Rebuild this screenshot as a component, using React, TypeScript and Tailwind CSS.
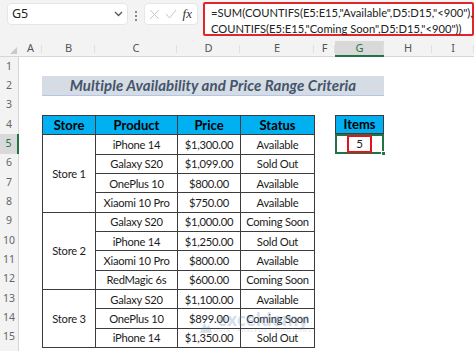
import React from "react";

type Row = { store?: string; span?: number; product: string; price: string; status: string };

const data: Row[] = [
  { store: "Store 1", span: 4, product: "iPhone 14", price: "$1,300.00", status: "Available" },
  { product: "Galaxy S20", price: "$1,099.00", status: "Sold Out" },
  { product: "OnePlus 10", price: "$800.00", status: "Available" },
  { product: "Xiaomi 10 Pro", price: "$750.00", status: "Available" },
  { store: "Store 2", span: 4, product: "Galaxy S20", price: "$1,000.00", status: "Coming Soon" },
  { product: "iPhone 14", price: "$1,250.00", status: "Sold Out" },
  { product: "Xiaomi 10 Pro", price: "$800.00", status: "Available" },
  { product: "RedMagic 6s", price: "$600.00", status: "Coming Soon" },
  { store: "Store 3", span: 3, product: "Galaxy S20", price: "$1,100.00", status: "Available" },
  { product: "OnePlus 10", price: "$899.00", status: "Coming Soon" },
  { product: "iPhone 14", price: "$1,350.00", status: "Sold Out" },
];

const cols = ["A", "B", "C", "D", "E", "F", "G", "H", "I"];
const rowNums = [1, 2, 3, 4, 5, 6, 7, 8, 9, 10, 11, 12, 13, 14, 15];

export default function App() {
  const cell = "border border-[#3c3c3c] text-center align-middle p-0 h-[19.33px] leading-none";
  return (
    <div className="w-[474px] h-[351px] overflow-hidden bg-[#f3f3f3] relative" style={{ fontFamily: "Lato, 'Liberation Sans', sans-serif" }}>
      {/* Formula bar */}
      <div className="flex items-start h-[41px] pl-[7px] pt-[2px]">
        <div className="mt-[1px] w-[121px] h-[22px] bg-white rounded-[4px] border border-[#e6e6e6] flex items-center justify-between pl-[4px] pr-[4px]" style={{ fontFamily: "'Noto Sans', sans-serif" }}>
          <span className="text-[12.5px] text-[#222]">G5</span>
          <svg width="9" height="6" viewBox="0 0 9 6"><path d="M1 1 L4.5 4.5 L8 1" stroke="#555" strokeWidth="1.3" fill="none" /></svg>
        </div>
        <div className="w-[16px] flex flex-col items-center gap-[2px] mt-[9px]">
          <span className="w-[2px] h-[2px] rounded-full bg-[#666]" />
          <span className="w-[2px] h-[2px] rounded-full bg-[#666]" />
          <span className="w-[2px] h-[2px] rounded-full bg-[#666]" />
        </div>
        <div className="mt-[1px] w-[54px] h-[22px] bg-white rounded-[4px] border border-[#e6e6e6] flex items-center justify-between px-[4px]">
          <svg width="11" height="11" viewBox="0 0 11 11"><path d="M1 1 L10 10 M10 1 L1 10" stroke="#c8c8c8" strokeWidth="1" fill="none" /></svg>
          <svg width="12" height="10" viewBox="0 0 12 10"><path d="M1 5 L4.5 9 L11 1" stroke="#c8c8c8" strokeWidth="1" fill="none" /></svg>
          <span className="text-[13px] italic text-[#333] pr-[1px]" style={{ fontFamily: "'Liberation Serif', serif" }}>fx</span>
        </div>
        <div className="ml-[5px] w-[271px] h-[34px] bg-white border-2 border-[#e0262b] rounded-[2px] pl-[6px] pt-[1px] text-[11.2px] leading-[15.5px] text-[#222] whitespace-nowrap" style={{ fontFamily: "Lato, sans-serif" }}>
          <div>=SUM(COUNTIFS(E5:E15,"Available",D5:D15,"&lt;900"),</div>
          <div>COUNTIFS(E5:E15,"Coming Soon",D5:D15,"&lt;900"))</div>
        </div>
      </div>

      {/* Sheet grid */}
      <div className="grid grid-cols-[19px_23px_53px_82px_63px_74px_21px_49px_48px_1fr] grid-rows-[16px_repeat(15,19.33px)_1fr] h-[310px] bg-white">
        {/* corner */}
        <div className="col-start-1 row-start-1 bg-[#f3f3f3] border-b border-[#d6d6d6] relative">
          <svg className="absolute right-[2px] bottom-[2px]" width="7" height="7" viewBox="0 0 7 7"><path d="M7 0 L7 7 L0 7 Z" fill="#c9c9c9" /></svg>
        </div>
        {cols.map((c, i) => (
          <div
            key={c}
            className={
              "row-start-1 flex items-center justify-center text-[11px] border-b relative " +
              (c === "G" ? "bg-[#d9d9d9] text-[#217346] border-b-2 border-[#217346]" : "bg-[#f3f3f3] text-[#555] border-[#d6d6d6]")
            }
            style={{ gridColumnStart: i + 2, fontFamily: "'Noto Sans', sans-serif" }}
          >
            {c}
            <span className="absolute right-0 top-[4px] bottom-[3px] w-px bg-[#e0e0e0]" />
          </div>
        ))}
        {/* row headers */}
        {rowNums.map((n) => (
          <div
            key={n}
            className={
              "col-start-1 flex items-center justify-center text-[10.5px] border-r " +
              (n === 5 ? "bg-[#d9d9d9] text-[#217346] border-r-2 border-[#217346]" : "bg-[#f3f3f3] text-[#666] border-[#d6d6d6]")
            }
            style={{ gridRowStart: n + 1, fontFamily: "'Noto Sans', sans-serif" }}
          >
            {n}
          </div>
        ))}
        <div className="col-start-1 row-start-17 bg-[#f3f3f3] border-r border-[#d6d6d6]" />

        {/* title */}
        <div className="col-start-3 col-span-6 row-start-3 bg-[#d6dce4] border-b border-[#b4c6e7] flex items-center justify-center">
          <span className="text-[15px] font-bold italic text-[#44546a] tracking-[0.1px]">Multiple Availability and Price Range Criteria</span>
        </div>

        {/* table */}
        <div className="col-start-3 col-span-4 row-start-5 row-span-12">
          <table className="w-[272px] border-collapse table-fixed text-[11.2px] tracking-[-0.25px] text-[#1c1c1c]">
            <colgroup>
              <col className="w-[53px]" />
              <col className="w-[82px]" />
              <col className="w-[63px]" />
              <col className="w-[74px]" />
            </colgroup>
            <thead>
              <tr>
                {["Store", "Product", "Price", "Status"].map((h) => (
                  <th key={h} className={cell + " bg-[#00b0f0] font-bold text-[13px] tracking-normal text-black"}>{h}</th>
                ))}
              </tr>
            </thead>
            <tbody>
              {data.map((r, i) => (
                <tr key={i}>
                  {r.store && (
                    <td rowSpan={r.span} className={cell}>{r.store}</td>
                  )}
                  <td className={cell}>{r.product}</td>
                  <td className={cell}>{r.price}</td>
                  <td className={cell}>{r.status}</td>
                </tr>
              ))}
            </tbody>
          </table>
        </div>

        {/* Items */}
        <div className="col-start-8 row-start-5 bg-[#00b0f0] border border-[#3c3c3c] flex items-center justify-center font-bold text-[13px] text-black">
          Items
        </div>
        <div className="col-start-8 row-start-6 relative border-2 border-[#217346] flex items-center justify-center">
          <div className="w-[25px] h-[18px] border-2 border-[#e0141b] flex items-center justify-center text-[11.5px] text-[#1c1c1c]">5</div>
          <span className="absolute -right-[4px] -bottom-[4px] w-[5px] h-[5px] bg-[#217346] border border-white" />
        </div>
      </div>

      {/* watermark */}
      <div className="absolute left-[200px] top-[311px] flex items-end gap-[2px] opacity-25 pointer-events-none">
        <svg width="12" height="11" viewBox="0 0 16 14"><path d="M0 14 L6 0 L9 7 L12 3 L16 14 Z" fill="#5b7fb3" /></svg>
        <div className="flex flex-col items-center leading-none">
          <span className="text-[17px] font-bold text-[#5b7fb3] leading-[17px]" style={{ fontFamily: "'Open Sans', sans-serif" }}>exceldemy</span>
          <span className="text-[5px] tracking-[1px] text-[#5b7fb3]">DATA · ANALYSIS · SOLUTIONS</span>
        </div>
      </div>
    </div>
  );
}
